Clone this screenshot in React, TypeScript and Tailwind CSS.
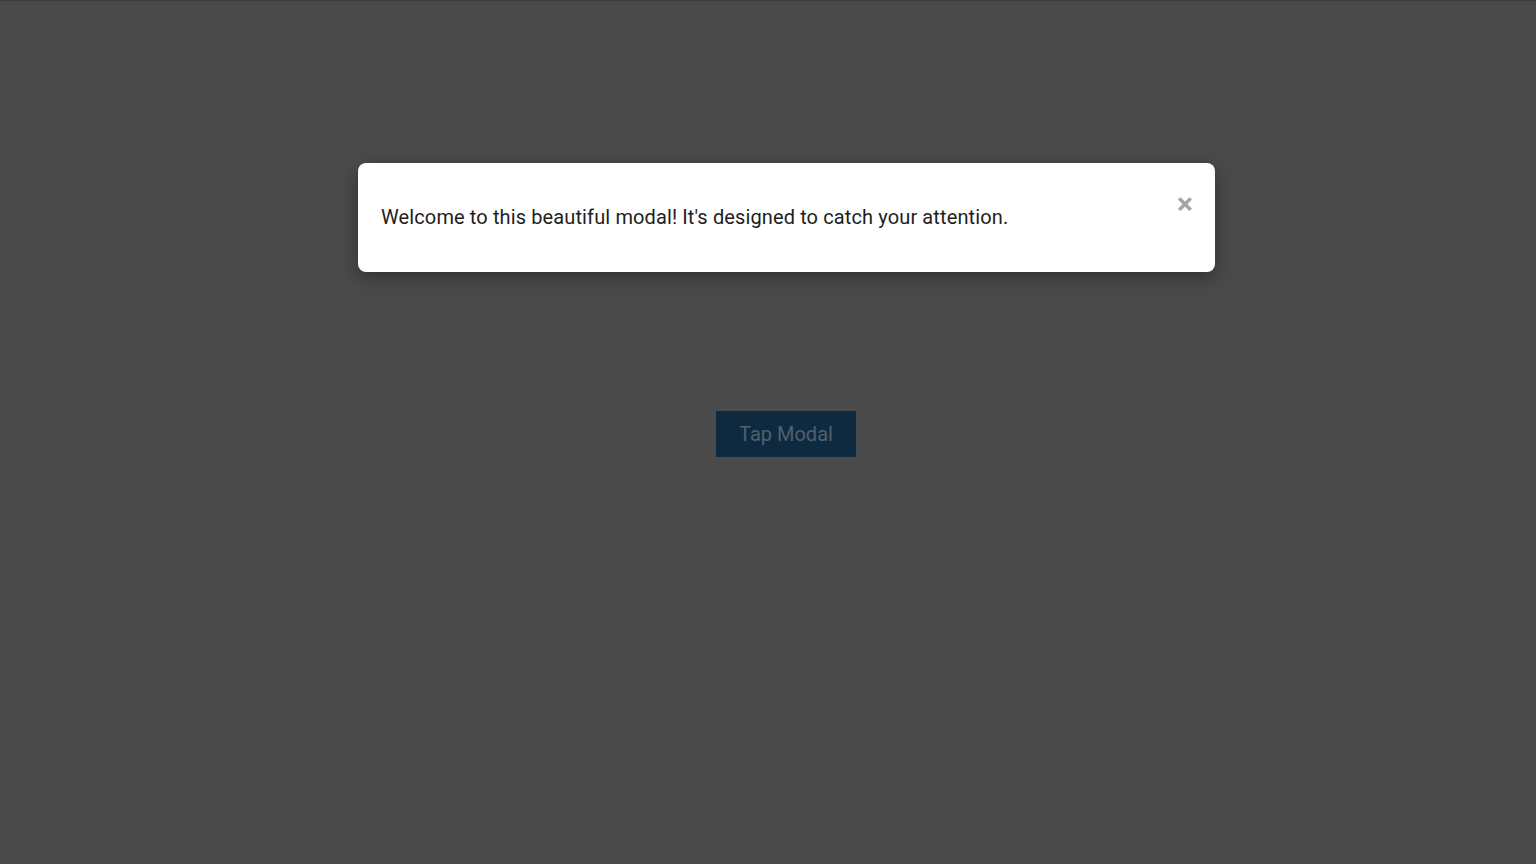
import React from "react";

export default function App() {
  return (
    <div
      className="relative w-[1536px] h-[864px] overflow-hidden bg-[#4a4a4a] border-t border-[#3c3c3c]"
      style={{ fontFamily: "Roboto, 'Noto Sans', sans-serif" }}
    >
      <div className="flex flex-col">
        <div className="h-[162px]" />
        <div className="ml-[358px] w-[857px] h-[109px] relative bg-white rounded-[8px] shadow-[0_6px_18px_rgba(0,0,0,0.35)] flex items-center px-[23px] pb-[2px]">
          <p className="text-[20px] text-[#1e1e1e] leading-none tracking-[0.12px]">
            Welcome to this beautiful modal! It's designed to catch your attention.
          </p>
          <span className="absolute right-[22px] top-[26px] text-[#a3a3a3] text-[30px] font-bold leading-none">
            ×
          </span>
        </div>
        <div className="h-[139px]" />
        <div className="ml-[716px] w-[140px] h-[46px] bg-[#0d2a41] flex items-center justify-center text-[20px] text-[#51606b]">
          Tap Modal
        </div>
      </div>
    </div>
  );
}
